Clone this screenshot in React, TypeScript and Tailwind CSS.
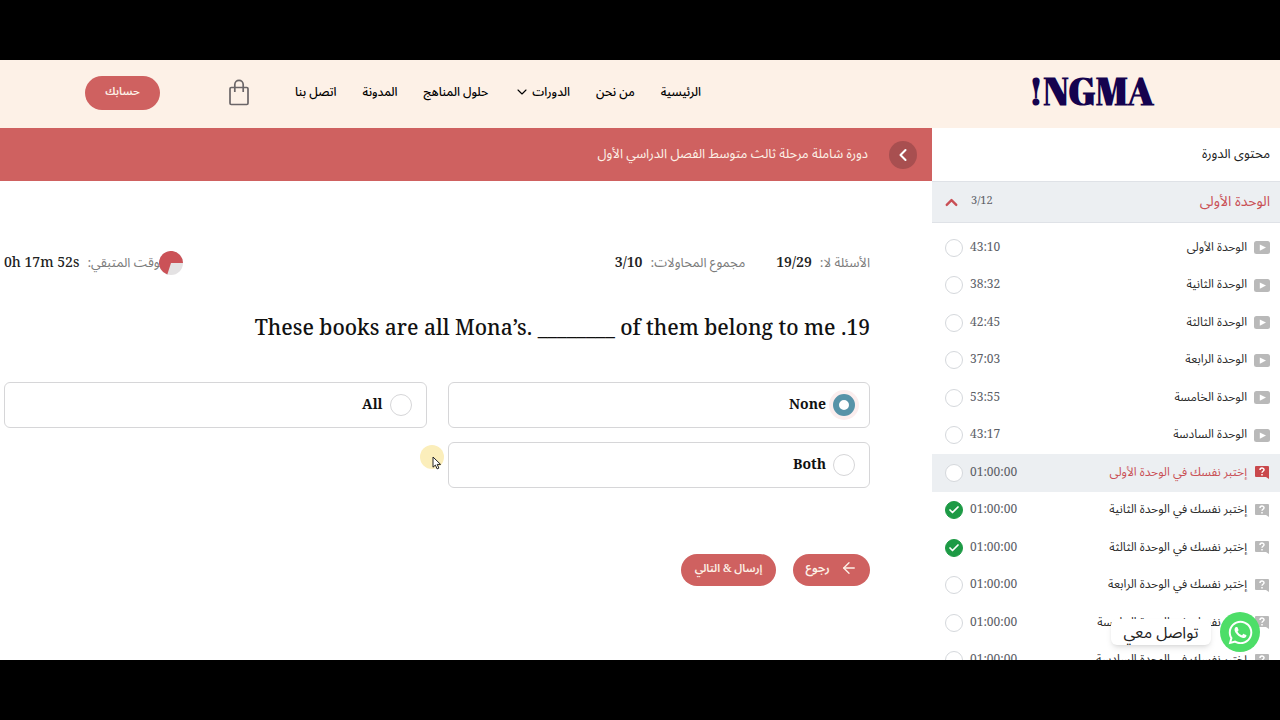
import React, { useState } from "react";
import { ArrowLeft, Check, ChevronDown, ChevronLeft, ChevronUp } from "lucide-react";
import { FaWhatsapp } from "react-icons/fa";

type Lesson = {
  title: string;
  time: string;
  kind: "video" | "quiz";
  done?: boolean;
  active?: boolean;
};

const navLinks = [
  { label: "الرئيسية" },
  { label: "من نحن" },
  { label: "الدورات", menu: true },
  { label: "حلول المناهج" },
  { label: "المدونة" },
  { label: "اتصل بنا" },
];

const lessons: Lesson[] = [
  { title: "الوحدة الأولى", time: "43:10", kind: "video" },
  { title: "الوحدة الثانية", time: "38:32", kind: "video" },
  { title: "الوحدة الثالثة", time: "42:45", kind: "video" },
  { title: "الوحدة الرابعة", time: "37:03", kind: "video" },
  { title: "الوحدة الخامسة", time: "53:55", kind: "video" },
  { title: "الوحدة السادسة", time: "43:17", kind: "video" },
  { title: "إختبر نفسك في الوحدة الأولى", time: "01:00:00", kind: "quiz", active: true },
  { title: "إختبر نفسك في الوحدة الثانية", time: "01:00:00", kind: "quiz", done: true },
  { title: "إختبر نفسك في الوحدة الثالثة", time: "01:00:00", kind: "quiz", done: true },
  { title: "إختبر نفسك في الوحدة الرابعة", time: "01:00:00", kind: "quiz" },
  { title: "إختبر نفسك في الوحدة الخامسة", time: "01:00:00", kind: "quiz" },
  { title: "إختبر نفسك في الوحدة السادسة", time: "01:00:00", kind: "quiz" },
];

const answers = ["None", "All", "Both"];

function BagIcon() {
  return (
    <svg width="20" height="27" viewBox="0 0 20 27" fill="none" stroke="#6b6668" strokeWidth="1.7">
      <rect x="1" y="8.5" width="18" height="17" rx="1.2" />
      <path d="M5.8 13V5.5a4.2 4.2 0 0 1 8.4 0V13" />
    </svg>
  );
}

function VideoIcon() {
  return (
    <svg width="16" height="13" viewBox="0 0 16 13">
      <rect width="16" height="13" rx="2.5" fill="#b9b9b9" />
      <path d="M5.8 3.4v6.4l6.2-3.2z" fill="#fff" />
    </svg>
  );
}

function QuizIcon({ active }: { active?: boolean }) {
  return (
    <svg width="16" height="13" viewBox="0 0 16 13">
      <path
        d="M2 0h12a1 1 0 0 1 1 1v12l-3-2H2a1 1 0 0 1-1-1V1a1 1 0 0 1 1-1z"
        fill={active ? "#c9484c" : "#b9b9b9"}
      />
      <path
        d="M6 3.9c0-2.4 4-2.4 4-.1 0 1.5-2 1.4-2 3M8 8v1.5"
        fill="none"
        stroke="#fff"
        strokeWidth="1.5"
      />
    </svg>
  );
}

function Header() {
  return (
    <header className="flex h-[68px] shrink-0 items-center bg-[#fdf1e7] pr-[126px] pb-0.5 pl-[85px]">
      <a
        href="#"
        className="w-[128px] pb-1 font-['Abril_Fatface','Playfair_Display','Liberation_Serif',serif] text-[38px] leading-[40px] font-bold text-[#15034f]"
      >
        NGMA!
      </a>
      <nav className="mr-[325px] flex items-center gap-[26px] pb-0.5 text-[12px] font-medium whitespace-nowrap text-black">
        {navLinks.map((link) => (
          <a key={link.label} href="#" className="flex items-center gap-0.5">
            {link.label}
            {link.menu && <ChevronDown size={16} strokeWidth={1.6} />}
          </a>
        ))}
      </nav>
      <button className="mr-auto pb-0.5">
        <BagIcon />
      </button>
      <button className="mr-[69px] h-[34px] w-[75px] rounded-full bg-[#cf6160] pb-1 text-[11px] font-semibold text-[#fdf1e7]">
        حسابك
      </button>
    </header>
  );
}

function LessonRow({ lesson, id }: { lesson: Lesson; id: string }) {
  return (
    <li className={`flex flex-1 items-center gap-[7px] pr-2.5 pl-[13px] ${lesson.active ? "bg-[#eceff2]" : ""}`}>
      {lesson.kind === "video" ? <VideoIcon /> : <QuizIcon active={lesson.active} />}
      <a
        id={id}
        href="#"
        className={`pb-0.5 text-[12px] whitespace-nowrap ${lesson.active ? "text-[#c94f55]" : "text-[#2b2b2b]"}`}
      >
        {lesson.title}
      </a>
      <span className="mr-auto pb-0.5 text-[12px] text-[#5c6067]">{lesson.time}</span>
      <span className="grid">
        <input
          type="checkbox"
          aria-labelledby={id}
          defaultChecked={lesson.done}
          className="col-start-1 row-start-1 size-[18px] appearance-none rounded-full border border-[#d5d8dc] bg-white checked:border-[#1d9a45] checked:bg-[#1d9a45]"
        />
        {lesson.done && (
          <Check
            size={12}
            strokeWidth={3.5}
            className="pointer-events-none col-start-1 row-start-1 place-self-center text-white"
          />
        )}
      </span>
    </li>
  );
}

function Sidebar() {
  return (
    <aside className="w-[348px] shrink-0 bg-white">
      <h2 className="flex h-[53px] items-center pr-2.5 pb-0.5 text-[13px] text-[#222]">محتوى الدورة</h2>
      <button className="flex h-[42px] w-full items-center gap-2.5 border-y border-[#dfe2e7] bg-[#eceff2] px-2.5">
        <span className="pb-1 text-[14px] text-[#c94f55]">الوحدة الأولى</span>
        <span className="mr-auto pb-1 text-[11px] text-[#5c6067]">3/12</span>
        <ChevronUp size={19} strokeWidth={3} className="text-[#c94f55]" />
      </button>
      <ul className="mt-1.5 flex h-[450px] flex-col">
        {lessons.map((lesson, i) => (
          <LessonRow key={lesson.title} lesson={lesson} id={`lesson-${i}`} />
        ))}
      </ul>
    </aside>
  );
}

function QuizMeta() {
  return (
    <div className="flex h-6 items-center gap-2 text-[14px] whitespace-nowrap text-[#222]">
      <span className="text-[13px] text-[#7b7b7b]">الأسئلة لا:</span>
      <b className="pb-1 font-semibold">19/29</b>
      <span className="mr-[23px] text-[13px] text-[#7b7b7b]">مجموع المحاولات:</span>
      <b className="pb-1 font-semibold">3/10</b>
      <svg className="relative z-10 mr-auto" width="24" height="24" viewBox="0 0 24 24">
        <circle cx="12" cy="12" r="12" fill="#e4e2e3" />
        <path d="M12 12L24 12A12 12 0 1 0 8.3 23.4z" fill="#cb5257" />
      </svg>
      <span className="-mr-[15px] text-[13px] text-[#7b7b7b]">الوقت المتبقي:</span>
      <span dir="ltr" className="pb-1 font-medium">
        0h 17m 52s
      </span>
    </div>
  );
}

function Quiz() {
  const [picked, setPicked] = useState("None");

  return (
    <section className="pt-[70px] pr-[62px] pl-1">
      <QuizMeta />
      <h1 className="mt-[35px] text-[21px] leading-[34px] font-medium whitespace-nowrap text-[#111]">
        19. These books are all Mona’s. ________ of them belong to me
      </h1>
      <div className="mt-[38px] grid grid-cols-2 gap-x-[21px] gap-y-3.5">
        {answers.map((answer) => (
          <label
            key={answer}
            className="flex h-[46px] items-center gap-[7px] rounded-md border border-[#d6d6d8] px-3.5 text-[14px] font-bold text-[#111]"
          >
            <input
              type="radio"
              name="answer"
              checked={picked === answer}
              onChange={() => setPicked(answer)}
              className="size-[22px] appearance-none rounded-full border border-[#d6d6d8] bg-white checked:border-[6px] checked:border-[#5793a8] checked:shadow-[0_0_0_4px_#fbeeee]"
            />
            <span className="pb-1">{answer}</span>
          </label>
        ))}
      </div>
      <div className="mt-[66px] flex gap-[17px] text-[11px] font-semibold text-[#fdf1e7]">
        <button className="flex h-[32px] w-[77px] items-center justify-center gap-2.5 rounded-full bg-[#cf6160] pb-1">
          <ArrowLeft size={18} strokeWidth={1.8} />
          <span className="text-[12px]">رجوع</span>
        </button>
        <button className="h-[32px] w-[95px] rounded-full bg-[#cf6160] pb-1">إرسال &amp; التالي</button>
      </div>
    </section>
  );
}

function Pointer() {
  return (
    <div className="pointer-events-none absolute top-[385px] left-[420px] z-20 size-6 rounded-full bg-[#fbeebb]">
      <svg className="absolute top-[11px] left-3" width="10" height="14" viewBox="0 0 10 14">
        <path
          d="M1 1v10.2l2.4-2.1 1.7 3.8 1.8-.8-1.7-3.7h3.4z"
          fill="#fff"
          stroke="#222"
          strokeWidth="1"
        />
      </svg>
    </div>
  );
}

export default function App() {
  return (
    <div
      dir="rtl"
      className="flex h-screen flex-col bg-black py-[60px] font-['Noto_Serif','Noto_Sans_Arabic','Noto_Sans','DejaVu_Sans',sans-serif]"
    >
      <div className="relative flex min-h-0 flex-1 flex-col overflow-hidden bg-white">
        <Header />
        <div className="flex min-h-0 flex-1">
          <Sidebar />
          <main className="min-w-0 flex-1">
            <div className="flex h-[53px] items-center gap-[21px] bg-[#cf6160] pr-[15px] text-[13px] text-[#fdf1e7]">
              <button className="grid size-7 place-items-center rounded-full bg-[#a84f50] text-white">
                <ChevronLeft size={20} strokeWidth={2.5} />
              </button>
              <span className="pb-0.5">دورة شاملة مرحلة ثالث متوسط الفصل الدراسي الأول</span>
            </div>
            <Quiz />
          </main>
        </div>
        <Pointer />
        <a href="#" className="absolute right-5 bottom-2 z-20 flex items-center gap-[9px]">
          <span className="grid size-10 place-items-center rounded-full bg-[#4dde68] text-white">
            <FaWhatsapp size={27} />
          </span>
          <span className="flex h-[26px] w-[100px] items-center justify-center rounded-md bg-white text-[16px] whitespace-nowrap text-[#222] shadow-md">
            تواصل معي
          </span>
        </a>
      </div>
    </div>
  );
}
